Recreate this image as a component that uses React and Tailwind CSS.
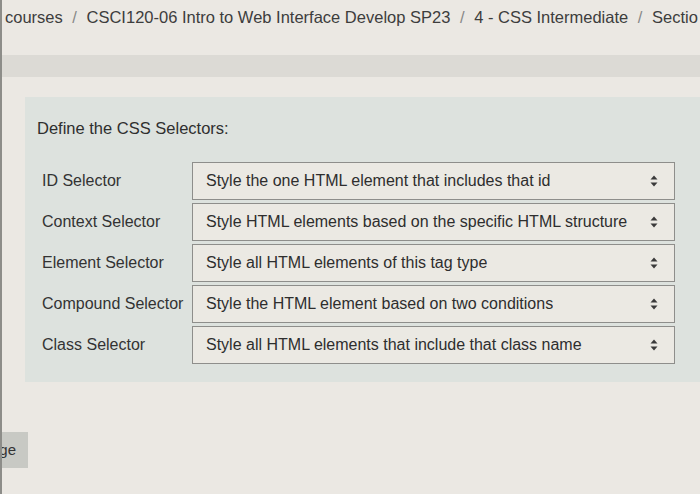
import { useState } from 'react'

const rows = [
  { label: 'ID Selector', value: 'Style the one HTML element that includes that id' },
  { label: 'Context Selector', value: 'Style HTML elements based on the specific HTML structure' },
  { label: 'Element Selector', value: 'Style all HTML elements of this tag type' },
  { label: 'Compound Selector', value: 'Style the HTML element based on two conditions' },
  { label: 'Class Selector', value: 'Style all HTML elements that include that class name' },
]

function UpDown() {
  return (
    <svg width="8" height="12" viewBox="0 0 8 12" className="shrink-0">
      <path d="M4 0.5 L7.5 4.5 L0.5 4.5 Z" fill="#3a3a3a" />
      <path d="M4 11.5 L7.5 7.5 L0.5 7.5 Z" fill="#3a3a3a" />
    </svg>
  )
}

function SelectBox({ value }) {
  return (
    <div className="h-[38px] flex items-center justify-between pl-[13px] pr-[16px] bg-[#ebe9e3] border border-[#8e8e8b] text-[16px] text-[#2e2e2e]">
      <span className="truncate">{value}</span>
      <UpDown />
    </div>
  )
}

export default function App() {
  const [answers] = useState(rows)

  return (
    <div className="w-[700px] h-[494px] overflow-hidden bg-[#ebe8e3] border-l-2 border-[#8d8d89] flex flex-col font-['Liberation_Sans',Arial,sans-serif] text-[#333]">
      {/* breadcrumb */}
      <div className="h-[36px] pl-[3px] pt-[5px] whitespace-nowrap overflow-hidden text-[16.5px] text-[#3d3d3d]">
        courses <span className="text-[#888] mx-[5px]">/</span> CSCI120-06 Intro to Web Interface Develop SP23{' '}
        <span className="text-[#888] mx-[5px]">/</span> 4 - CSS Intermediate <span className="text-[#888] mx-[5px]">/</span> Sectio
      </div>

      <div className="h-[19px]" />
      <div className="h-[22px] bg-[#dcdad5]" />
      <div className="h-[20px]" />

      {/* question panel */}
      <div className="ml-[23px] h-[285px] bg-[#dde2de] pl-[12px] pt-[19px]">
        <p className="text-[16.5px] text-[#2f2f2f]">Define the CSS Selectors:</p>

        <div className="mt-[21px] flex flex-col gap-[3px] pl-[5px] w-[638px]">
          {answers.map((r) => (
            <div key={r.label} className="grid grid-cols-[150px_1fr] items-center">
              <span className="text-[16px] text-[#333] whitespace-nowrap">{r.label}</span>
              <SelectBox value={r.value} />
            </div>
          ))}
        </div>
      </div>

      <div className="h-[50px]" />
      <div className="w-[26px] h-[36px] bg-[#c8c9c4] flex items-center justify-end pr-[12px] text-[15px] text-[#333]">
        ge
      </div>
    </div>
  )
}
